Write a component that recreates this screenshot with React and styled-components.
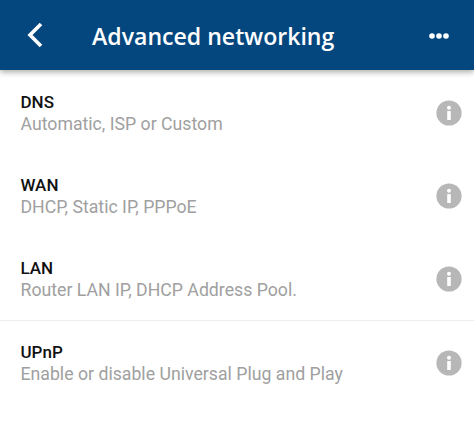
import styled, { createGlobalStyle } from "styled-components";

const GlobalStyle = createGlobalStyle`
  html, body {
    margin: 0;
    padding: 0;
    background: #ffffff;
  }
  body {
    font-family: Roboto, "Liberation Sans", sans-serif;
  }
`;

const rows = [
  { title: "DNS", desc: "Automatic, ISP or Custom" },
  { title: "WAN", desc: "DHCP, Static IP, PPPoE" },
  { title: "LAN", desc: "Router LAN IP, DHCP Address Pool.", divider: true },
  { title: "UPnP", desc: "Enable or disable Universal Plug and Play" },
];

function BackIcon() {
  return (
    <svg width="18" height="26" viewBox="0 0 18 26">
      <path d="M15 2 L4 13 L15 24" fill="none" stroke="#fff" strokeWidth="3.6" />
    </svg>
  );
}

function MoreIcon() {
  return (
    <svg width="20" height="6" viewBox="0 0 20 6">
      <circle cx="3" cy="3" r="2.8" fill="#fff" />
      <circle cx="10" cy="3" r="2.8" fill="#fff" />
      <circle cx="17" cy="3" r="2.8" fill="#fff" />
    </svg>
  );
}

function InfoIcon() {
  return (
    <svg width="26" height="26" viewBox="0 0 26 26">
      <circle cx="13" cy="13" r="12.6" fill="#b7b7b7" />
      <circle cx="13" cy="7.8" r="2" fill="#fff" />
      <rect x="11.2" y="11" width="3.6" height="9" rx="0.6" fill="#fff" />
    </svg>
  );
}

function App() {
  return (
    <Page>
      <GlobalStyle />
      <Header>
        <BackButton>
          <BackIcon />
        </BackButton>
        <Title>Advanced networking</Title>
        <MoreButton>
          <MoreIcon />
        </MoreButton>
      </Header>
      <List>
        {rows.map((row) => (
          <Row key={row.title} $divider={row.divider}>
            <RowText>
              <RowTitle>{row.title}</RowTitle>
              <RowDesc>{row.desc}</RowDesc>
            </RowText>
            <InfoIcon />
          </Row>
        ))}
      </List>
    </Page>
  );
}

const Page = styled.div`
  width: 474px;
  height: 421px;
  overflow: hidden;
  background: #fff;
`;

const Header = styled.header`
  position: relative;
  height: 70px;
  background: #04477f;
  box-shadow: 0 2px 6px rgba(0, 0, 0, 0.35);
  display: flex;
  align-items: center;
  padding: 0 25px 0 26px;
  box-sizing: border-box;
`;

const BackButton = styled.div`
  display: flex;
  width: 66px;
`;

const Title = styled.h1`
  flex: 1;
  margin: 0;
  padding-top: 1px;
  color: #fff;
  font-family: "Open Sans", sans-serif;
  font-size: 23.1px;
  font-weight: 600;
  line-height: 32px;
`;

const MoreButton = styled.div`
  display: flex;
  padding-top: 1px;
`;

const List = styled.div`
  display: flex;
  flex-direction: column;
  padding-top: 1px;
`;

const Row = styled.div`
  height: 83.4px;
  box-sizing: border-box;
  display: flex;
  justify-content: space-between;
  align-items: center;
  padding: 0 12px 0 20.5px;
  border-bottom: ${(props) => (props.$divider ? "1px solid #eeeeee" : "none")};
`;

const RowText = styled.div`
  display: flex;
  flex-direction: column;
  padding-top: 1px;
`;

const RowTitle = styled.div`
  color: #111;
  font-size: 17px;
  font-weight: 500;
  line-height: 21px;
`;

const RowDesc = styled.div`
  color: #a0a0a0;
  font-size: 17.7px;
  line-height: 21px;
  margin-top: 1px;
`;

export default App;
